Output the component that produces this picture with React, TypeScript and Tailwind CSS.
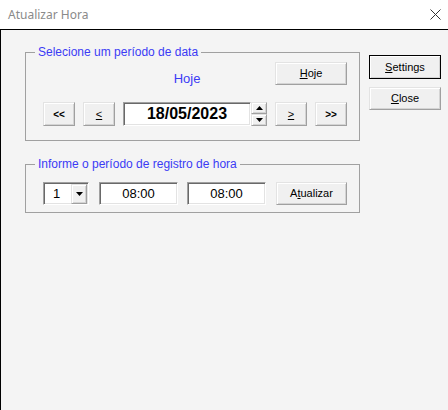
import React from 'react';

const ui = { fontFamily: '"Liberation Sans", Arial, sans-serif' };

const raised =
    'box-border bg-[#f0f0f0] border border-t-[#e3e3e3] border-l-[#e3e3e3] border-b-[#a0a0a0] border-r-[#a0a0a0] shadow-[inset_1px_1px_0_#ffffff,inset_-1px_-1px_0_#d4d4d4] flex items-center justify-center text-[11px] text-black';

const sunken =
    'box-border bg-white border border-t-[#a0a0a0] border-l-[#a0a0a0] border-b-white border-r-white shadow-[inset_1px_1px_0_#696969,inset_-1px_-1px_0_#e3e3e3] flex items-center justify-center';

const Btn: React.FC<{ className?: string; children: React.ReactNode }> = ({ className = '', children }) => (
    <button type="button" className={`${raised} ${className}`}>
        {children}
    </button>
);

const Tri: React.FC<{ up?: boolean }> = ({ up }) => (
    <svg width="7" height="4" viewBox="0 0 7 4">
        <polygon points={up ? '0,4 7,4 3.5,0' : '0,0 7,0 3.5,4'} fill="#000" />
    </svg>
);

const Group: React.FC<{ label: string; className?: string; children: React.ReactNode }> = ({ label, className = '', children }) => (
    <div className={`relative box-border border border-[#a0a0a0] w-[335px] ${className}`}>
        <span className="absolute -top-[8px] left-[9px] bg-[#f4f4f4] px-[3px] text-[12px] leading-[14px] text-[#3b3bf5]">
            {label}
        </span>
        {children}
    </div>
);

export default function App() {
    return (
        <div className="w-[448px] h-[410px] overflow-hidden flex flex-col bg-[#f4f4f4]" style={ui}>
            <div className="h-[30px] shrink-0 bg-white flex items-center justify-between pl-[8px] pr-[7px] border-b border-black">
                <span className="text-[12px] text-[#8a8a8a]" style={{ fontFamily: '"Noto Sans", "Open Sans", sans-serif' }}>
                    Atualizar Hora
                </span>
                <svg width="11" height="11" viewBox="0 0 11 11">
                    <path d="M0.5 0.5 L10.5 10.5 M10.5 0.5 L0.5 10.5" stroke="#333" strokeWidth="1" />
                </svg>
            </div>
            <div className="flex-1 flex border-l border-black">
                <div className="flex flex-col ml-[24px] mt-[22px]">
                    <Group label="Selecione um período de data" className="h-[89px] pt-[9px] pl-[17px]">
                        <div className="flex items-start h-[23px]">
                            <div className="w-[80px]" />
                            <div className="w-[128px] mt-[9px] text-center text-[13px] leading-[15px] text-[#3b3bf5]">Hoje</div>
                            <div className="w-[24px]" />
                            <Btn className="w-[72px] h-[23px]">
                                <span><u>H</u>oje</span>
                            </Btn>
                        </div>
                        <div className="flex items-center mt-[17px] h-[24px]">
                            <Btn className="w-[32px] h-[24px] font-bold !text-[10px]">&lt;&lt;</Btn>
                            <Btn className="w-[32px] h-[24px] ml-[8px]">
                                <u>&lt;</u>
                            </Btn>
                            <div className={`${sunken} w-[128px] h-[24px] ml-[8px] text-[16px] font-bold`}>18/05/2023</div>
                            <div className="flex flex-col w-[16px] h-[24px]">
                                <div className={`${raised} h-[12px]`}>
                                    <Tri up />
                                </div>
                                <div className={`${raised} h-[12px]`}>
                                    <Tri />
                                </div>
                            </div>
                            <Btn className="w-[32px] h-[24px] ml-[8px]">
                                <u>&gt;</u>
                            </Btn>
                            <Btn className="w-[32px] h-[24px] ml-[8px] font-bold !text-[10px]">&gt;&gt;</Btn>
                        </div>
                    </Group>
                    <Group label="Informe o período de registro de hora" className="h-[49px] mt-[23px] pt-[17px] pl-[17px]">
                        <div className="flex items-center h-[23px]">
                            <div className={`${sunken} w-[46px] h-[23px] !justify-between pl-[9px] pr-[1px] text-[13px]`}>
                                <span>1</span>
                                <div className={`${raised} w-[16px] h-[20px]`}>
                                    <Tri />
                                </div>
                            </div>
                            <div className={`${sunken} w-[79px] h-[23px] ml-[10px] text-[13px]`}>08:00</div>
                            <div className={`${sunken} w-[79px] h-[23px] ml-[9px] text-[13px]`}>08:00</div>
                            <Btn className="w-[71px] h-[23px] ml-[10px]">
                                <span>A<u>t</u>ualizar</span>
                            </Btn>
                        </div>
                    </Group>
                </div>
                <div className="flex flex-col ml-[9px] mt-[25px]">
                    <Btn className="w-[72px] h-[24px] !border-black">
                        <span><u>S</u>ettings</span>
                    </Btn>
                    <Btn className="w-[72px] h-[23px] mt-[8px]">
                        <span><u>C</u>lose</span>
                    </Btn>
                </div>
            </div>
        </div>
    );
}
